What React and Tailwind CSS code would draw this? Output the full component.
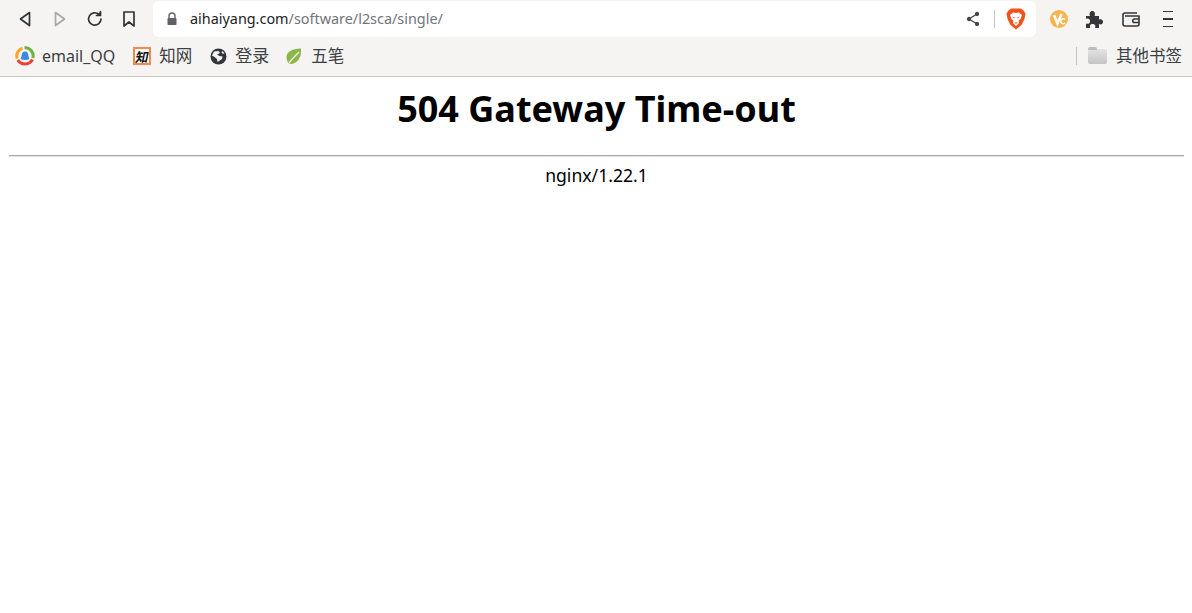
const cjk = { fontFamily: '"Noto Sans", "Noto Sans CJK SC", sans-serif' }

function NavIcon({ children, className = '' }) {
  return (
    <svg width="20" height="20" viewBox="0 0 20 20" fill="none" stroke="currentColor" strokeWidth="1.7" strokeLinejoin="round" strokeLinecap="round" className={className}>
      {children}
    </svg>
  )
}

function QQIcon() {
  return (
    <svg width="20" height="20" viewBox="0 0 20 20">
      <path d="M2.2 12.5 A8 8 0 0 1 7.5 2.2" fill="none" stroke="#f5a623" strokeWidth="3" />
      <path d="M9.5 1.8 A8 8 0 0 1 17.8 12" fill="none" stroke="#6cb33f" strokeWidth="3" />
      <path d="M17.5 13.5 A8.5 8.5 0 0 1 2.8 14" fill="none" stroke="#e8432e" strokeWidth="3" />
      <path d="M10 5.5 C12.4 5.5 13.4 7.6 13.4 10 L14.4 13 C12 14.4 8 14.4 5.6 13 L6.6 10 C6.6 7.6 7.6 5.5 10 5.5Z" fill="#3b8be0" />
    </svg>
  )
}

function CnkiIcon() {
  return (
    <div className="w-[18px] h-[18px] border-2 border-[#f08a4b] bg-white flex items-center justify-center overflow-hidden">
      <span className="text-[13px] leading-none font-bold text-[#111] -skew-x-12" style={{ fontFamily: '"Noto Sans CJK SC", sans-serif' }}>知</span>
    </div>
  )
}

function GlobeIcon() {
  return (
    <svg width="17" height="17" viewBox="0 0 17 17">
      <circle cx="8.5" cy="8.5" r="8" fill="#33363a" />
      <path d="M4 3.5 L8.5 3 L10 5 L7 6.5 L9.5 8 L12.5 8.5 L12 11 L9 13 L7.5 14 L7 11 L4.5 9 L2 7.5Z" fill="#f5f4f2" />
      <path d="M12 3 L14.5 5 L13 6 L11.5 4.5Z" fill="#f5f4f2" />
    </svg>
  )
}

function LeafIcon() {
  return (
    <svg width="16" height="17" viewBox="0 0 16 17">
      <path d="M0.5 9 C0.5 4 6 0.5 15 0.5 C15.5 9 12 15.5 5 16 C2 16 0.5 12.5 0.5 9Z" fill="#8cb64a" />
      <path d="M3 15 C6 11 9 8 13 4" fill="none" stroke="#eef4df" strokeWidth="1.3" />
      <path d="M13.5 6 L15 6 L14 9Z" fill="#7fb7c9" />
    </svg>
  )
}

function BraveIcon() {
  return (
    <svg width="20" height="22" viewBox="0 0 20 22">
      <path d="M5 0.5 H15 L17.5 2.5 L19.5 5.5 L18.5 11 L15.5 17 L10 21.5 L4.5 17 L1.5 11 L0.5 5.5 L2.5 2.5Z" fill="#f1511b" />
      <path d="M4 7 L7 4.5 L10 5 L13 4.5 L16 7 L14.5 11 L12.5 13 L13 15 L10 18 L7 15 L7.5 13 L5.5 11Z" fill="#fff" />
      <path d="M6.5 8.5 L9 9.5 L8 10.5Z M13.5 8.5 L11 9.5 L12 10.5Z M8.5 14.5 H11.5 L10 16Z" fill="#f1511b" />
    </svg>
  )
}

function KeeperIcon() {
  return (
    <svg width="18" height="18" viewBox="0 0 18 18">
      <circle cx="9" cy="9" r="9" fill="#f9b44c" />
      <path d="M4 5 L7.5 13.5 L11.5 4" fill="none" stroke="#fff" strokeWidth="2.6" />
      <path d="M15 9.5 A2.5 2.5 0 1 0 15 13" fill="none" stroke="#fff" strokeWidth="1.6" />
    </svg>
  )
}

function PuzzleIcon() {
  return (
    <svg width="18" height="18" viewBox="0 0 18 18">
      <path d="M1 6 H5 C4 3.5 5 1 7.3 1 C9.6 1 10.6 3.5 9.6 6 H14 V9.6 C16 8.6 18 9.7 18 11.8 C18 14 16 15 14 14 V18 H10 C11 16 10 14 7.6 14 C5.3 14 4.3 16 5.3 18 H1 V13.5 C3 14.4 5 13.4 5 11.2 C5 9 3 8 1 9Z" fill="#33363a" />
    </svg>
  )
}

export default function App() {
  return (
    <div className="min-h-[613px] bg-white flex flex-col" style={cjk}>
      <div className="h-[77px] bg-[#f5f4f2] border-b border-[#c9c9c9] flex flex-col shrink-0">
        <div className="h-[38px] flex items-center">
          <div className="w-[153px] pl-[15px] flex items-center text-[#303338]">
            <NavIcon><path d="M14.5 3.5 L5.5 10 L14.5 16.5Z" /></NavIcon>
            <NavIcon className="text-[#a5a7aa] ml-[15px]"><path d="M5.5 3.5 L14.5 10 L5.5 16.5Z" /></NavIcon>
            <NavIcon className="ml-[15px]"><path d="M16 10 A6.2 6.2 0 1 1 14.2 5.6" /><path d="M15.5 2.5 V6.5 H11.5" fill="currentColor" /></NavIcon>
            <NavIcon className="ml-[14px]"><path d="M5 3 H15 V17 L10 13 L5 17Z" /></NavIcon>
          </div>
          <div className="w-[883px] h-[36px] bg-white rounded-[6px] flex items-center pl-[13px] pr-[10px]">
            <svg width="12" height="14" viewBox="0 0 12 14" className="mr-[12px]">
              <path d="M3 6 V4 A3 3 0 0 1 9 4 V6" fill="none" stroke="#5f6368" strokeWidth="1.4" />
              <rect x="1.5" y="6" width="9" height="7" rx="1" fill="#5f6368" />
            </svg>
            <span className="text-[14.4px] text-[#222]">aihaiyang.com</span>
            <span className="text-[14.4px] text-[#70757a]">/software/l2sca/single/</span>
            <div className="ml-auto flex items-center">
              <svg width="16" height="16" viewBox="0 0 16 16" fill="#44474b" stroke="#44474b" strokeWidth="1.3" className="mr-[13px]">
                <path d="M12 3 L4 8 L12 13" fill="none" />
                <circle cx="12" cy="3" r="1.5" />
                <circle cx="4" cy="8" r="1.5" />
                <circle cx="12" cy="13" r="1.5" />
              </svg>
              <div className="w-px h-[18px] bg-[#c4c4c4] mr-[11px]" />
              <BraveIcon />
            </div>
          </div>
          <div className="flex-1 flex items-center pl-[14px]">
            <KeeperIcon />
            <div className="ml-[17px]"><PuzzleIcon /></div>
            <svg width="18" height="16" viewBox="0 0 18 16" fill="none" stroke="#33363a" strokeWidth="1.6" strokeLinejoin="round" className="ml-[19px]">
              <path d="M15 2 H3 A2 2 0 0 0 1 4 V13 A2 2 0 0 0 3 15 H15 A2 2 0 0 0 17 13 V5 H3" />
              <path d="M17 8 H12.5 A1.5 1.5 0 0 0 12.5 11.5 H17" />
            </svg>
            <div className="ml-[23px] w-[10px] flex flex-col gap-[6px]">
              <div className="h-[1.5px] bg-[#33363a]" />
              <div className="h-[1.5px] bg-[#33363a]" />
              <div className="h-[1.5px] bg-[#33363a]" />
            </div>
          </div>
        </div>
        <div className="flex-1 flex items-center pl-[15px] pr-[10px] pb-[2px] text-[16px] text-[#3c4043]">
          <div className="flex items-center gap-[8px]"><QQIcon /><span className="ml-[-1px]">email_QQ</span></div>
          <div className="flex items-center gap-[8px] ml-[18px]"><CnkiIcon /><span className="text-[16.5px]">知网</span></div>
          <div className="flex items-center gap-[8px] ml-[18px]"><GlobeIcon /><span className="text-[17px]">登录</span></div>
          <div className="flex items-center gap-[9px] ml-[17px]"><LeafIcon /><span className="text-[16.5px]">五笔</span></div>
          <div className="ml-auto flex items-center">
            <div className="w-px h-[18px] bg-[#c4c4c4] mr-[11px]" />
            <div className="relative w-[19px] h-[15px] rounded-[2px] bg-gradient-to-b from-[#e4e4e4] to-[#c4c4c4] mr-[9px]">
              <div className="absolute -top-[2px] left-0 w-[9px] h-[3px] rounded-t-[2px] bg-[#bdbdbd]" />
            </div>
            <span className="text-[16.5px]">其他书签</span>
          </div>
        </div>
      </div>
      <div className="px-[8px] flex-1 text-black">
        <h1 className="text-[36px] leading-[49px] font-bold text-center mt-[7px] ml-px">504 Gateway Time-out</h1>
        <div className="mt-[22px] h-[2px] ml-px border-t border-b border-t-[#a8a8a8] border-b-[#e4e4e4]" />
        <p className="text-[17.6px] leading-[24px] text-center mt-[6px] ml-px">nginx/1.22.1</p>
      </div>
    </div>
  )
}
